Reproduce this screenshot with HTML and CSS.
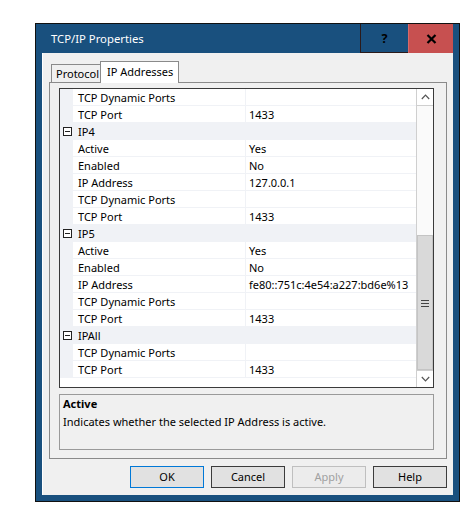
FILE: index.html
```html
<!DOCTYPE html>
<html>
<head>
<meta charset="utf-8">
<title>TCP/IP Properties</title>
<link rel="stylesheet" href="styles.css">
</head>
<body>
<div class="window">
  <div class="titlebar">
    <div class="title">TCP/IP Properties</div>
    <div class="tb-btn help">?</div>
    <div class="tb-btn close">
      <svg width="11" height="10" viewBox="0 0 11 10"><path d="M1.5 1 L9.5 9 M9.5 1 L1.5 9" stroke="#000" stroke-width="2.2" fill="none"/></svg>
    </div>
  </div>
  <div class="client">
    <div class="tabs">
      <div class="tab">Protocol</div>
      <div class="tab active">IP Addresses</div>
    </div>
    <div class="panel">
      <div class="grid">
        <div class="rows">
          <div class="row prop"><div class="m"></div><div class="n">TCP Dynamic Ports</div><div class="v"></div></div>
          <div class="row prop"><div class="m"></div><div class="n">TCP Port</div><div class="v">1433</div></div>
          <div class="row cat"><div class="m"><span class="minus"></span></div><div class="n">IP4</div></div>
          <div class="row prop"><div class="m"></div><div class="n">Active</div><div class="v">Yes</div></div>
          <div class="row prop"><div class="m"></div><div class="n">Enabled</div><div class="v">No</div></div>
          <div class="row prop"><div class="m"></div><div class="n">IP Address</div><div class="v">127.0.0.1</div></div>
          <div class="row prop"><div class="m"></div><div class="n">TCP Dynamic Ports</div><div class="v"></div></div>
          <div class="row prop"><div class="m"></div><div class="n">TCP Port</div><div class="v">1433</div></div>
          <div class="row cat"><div class="m"><span class="minus"></span></div><div class="n">IP5</div></div>
          <div class="row prop"><div class="m"></div><div class="n">Active</div><div class="v">Yes</div></div>
          <div class="row prop"><div class="m"></div><div class="n">Enabled</div><div class="v">No</div></div>
          <div class="row prop"><div class="m"></div><div class="n">IP Address</div><div class="v">fe80::751c:4e54:a227:bd6e%13</div></div>
          <div class="row prop"><div class="m"></div><div class="n">TCP Dynamic Ports</div><div class="v"></div></div>
          <div class="row prop"><div class="m"></div><div class="n">TCP Port</div><div class="v">1433</div></div>
          <div class="row cat"><div class="m"><span class="minus"></span></div><div class="n">IPAll</div></div>
          <div class="row prop"><div class="m"></div><div class="n">TCP Dynamic Ports</div><div class="v"></div></div>
          <div class="row prop"><div class="m"></div><div class="n">TCP Port</div><div class="v">1433</div></div>
          <div class="filler"><div class="m"></div></div>
        </div>
        <div class="scrollbar">
          <div class="sb-btn up"><svg width="9" height="6" viewBox="0 0 9 6"><path d="M0.8 5 L4.5 1.2 L8.2 5" stroke="#555" stroke-width="1.2" fill="none"/></svg></div>
          <div class="track"></div>
          <div class="thumb">
            <svg width="8" height="8" viewBox="0 0 8 8"><path d="M0 1.5 H8 M0 4.5 H8 M0 7.5 H8" stroke="#444" stroke-width="1.1" fill="none"/></svg>
          </div>
          <div class="sb-btn down"><svg width="9" height="6" viewBox="0 0 9 6"><path d="M0.8 1 L4.5 4.8 L8.2 1" stroke="#555" stroke-width="1.2" fill="none"/></svg></div>
        </div>
      </div>
      <div class="desc">
        <div class="desc-title">Active</div>
        <div class="desc-text">Indicates whether the selected IP Address is active.</div>
      </div>
    </div>
    <div class="buttons">
      <div class="btn default">OK</div>
      <div class="btn">Cancel</div>
      <div class="btn disabled">Apply</div>
      <div class="btn">Help</div>
    </div>
  </div>
</div>
</body>
</html>
```
FILE: styles.css
```css
html, body {
  margin: 0;
  padding: 0;
  background: #ffffff;
}
body {
  font-family: "Noto Sans", "Open Sans", sans-serif;
  font-size: 11px;
  color: #000;
}
.window {
  margin: 23px 0 0 35px;
  width: 425px;
  height: 479px;
  box-sizing: border-box;
  border: 1px solid #111;
  background: #19507e;
  padding: 0 6px 6px 6px;
  display: flex;
  flex-direction: column;
}
.titlebar {
  height: 29px;
  display: flex;
  align-items: stretch;
}
.title {
  flex: 1;
  color: #fff;
  padding-left: 9px;
  line-height: 30px;
  font-size: 11.3px;
}
.tb-btn {
  display: flex;
  align-items: center;
  justify-content: center;
  box-sizing: border-box;
}
.help {
  width: 48px;
  border-left: 1px solid #2b1a1a;
  border-bottom: 1px solid #2b1a1a;
  font-weight: bold;
  font-size: 12.5px;
  color: #000;
}
.close {
  width: 45px;
  background: #c75050;
  border-left: 1px solid #d86a6a;
}
.client {
  flex: 1;
  background: #f0f0f0;
  box-shadow: inset 1px 0 0 #ffffff;
  display: flex;
  flex-direction: column;
  padding-top: 8px;
}
.tabs {
  display: flex;
  align-items: flex-end;
  height: 21px;
  margin-left: 9px;
  position: relative;
  z-index: 1;
}
.tab {
  box-sizing: border-box;
  height: 18px;
  border: 1px solid #8a8a8a;
  border-bottom: none;
  border-right: none;
  padding: 0 0 0 4px;
  line-height: 18px;
  background: #f0f0f0;
  width: 49px;
  white-space: nowrap;
  overflow: hidden;
}
.tab.active {
  height: 22px;
  margin-bottom: -1px;
  width: 79px;
  border-right: 1px solid #8a8a8a;
  background: #ffffff;
  padding-left: 6px;
  line-height: 20px;
}
.panel {
  margin: 0 6px 0 7px;
  height: 377px;
  box-sizing: border-box;
  border: 1px solid #8a8a8a;
  padding: 5px 12px 0 9px;
  display: flex;
  flex-direction: column;
}
.grid {
  height: 300px;
  box-sizing: border-box;
  border: 1px solid #3a3a3a;
  background: #fff;
  display: flex;
}
.rows {
  flex: 1;
  display: flex;
  flex-direction: column;
}
.row {
  display: grid;
  grid-template-columns: 13px 172px 1fr;
  height: 17px;
  box-sizing: border-box;
}
.m {
  background: #f0f2f6;
  display: flex;
  align-items: center;
  justify-content: flex-end;
}
.n, .v {
  height: 17px;
  box-sizing: border-box;
  line-height: 18px;
  white-space: nowrap;
  overflow: hidden;
  border-bottom: 1px solid #f0f2f6;
}
.n {
  padding-left: 5px;
}
.v {
  border-left: 1px solid #f0f2f6;
  padding-left: 3px;
}
.row.cat {
  background: #f0f2f6;
  grid-template-columns: 13px 1fr;
}
.row.cat .n {
  border-bottom: none;
}
.minus {
  width: 9px;
  height: 9px;
  box-sizing: border-box;
  border: 1px solid #222;
  background: #fff;
  margin-right: 1px;
  margin-top: -1px;
  position: relative;
}
.minus::after {
  content: "";
  position: absolute;
  left: 1px;
  right: 1px;
  top: 3px;
  height: 1px;
  background: #222;
}
.filler {
  flex: 1;
  display: grid;
  grid-template-columns: 13px 1fr;
}
.filler .m {
  background: #fff;
}
.scrollbar {
  width: 17px;
  box-sizing: border-box;
  border-left: 1px solid #cfcfcf;
  display: flex;
  flex-direction: column;
  background: #fafafa;
}
.sb-btn {
  height: 17px;
  display: flex;
  align-items: center;
  justify-content: center;
  background: #fff;
  box-sizing: border-box;
}
.sb-btn.up {
  border-bottom: 1px solid #cfcfcf;
}
.sb-btn.down {
  border-top: 1px solid #cfcfcf;
}
.track {
  height: 129px;
}
.thumb {
  flex: 1;
  background: #d9d9d9;
  box-sizing: border-box;
  border: 1px solid #c4c4c4;
  display: flex;
  align-items: center;
  justify-content: center;
}
.desc {
  margin-top: 6px;
  height: 56px;
  box-sizing: border-box;
  border: 1px solid #9a9a9a;
  padding: 0 3px;
  line-height: 17px;
}
.desc-title {
  font-weight: bold;
}
.desc-text {
  margin-top: 1px;
}
.buttons {
  display: flex;
  justify-content: flex-end;
  gap: 7px;
  margin-top: 7px;
  margin-right: 6px;
}
.btn {
  width: 74px;
  height: 22px;
  box-sizing: border-box;
  border: 1px solid #3c3c3c;
  background: #e1e1e1;
  text-align: center;
  line-height: 20px;
}
.btn.default {
  border-color: #0078d7;
}
.btn.disabled {
  border-color: #bfbfbf;
  color: #a0a0a0;
  background: #ececec;
}
```
